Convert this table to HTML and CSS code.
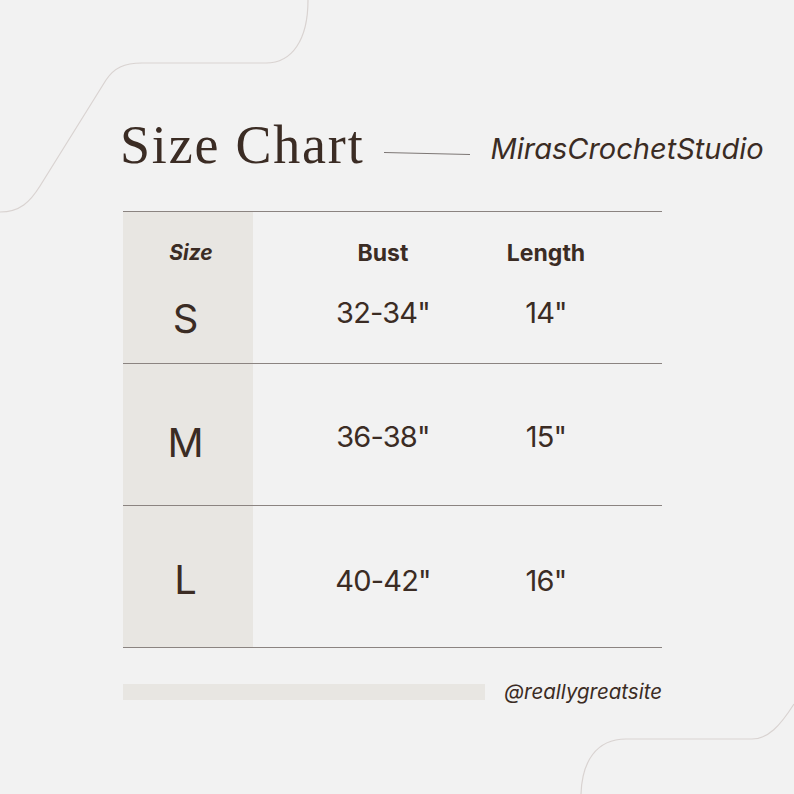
FILE: index.html
```html
<!DOCTYPE html>
<html lang="en">
<head>
<meta charset="utf-8">
<title>Size Chart</title>
<link rel="stylesheet" href="styles.css">
</head>
<body>
<div class="page">
  <svg class="deco" width="794" height="794" viewBox="0 0 794 794" aria-hidden="true">
    <path d="M0,212 C20,212 30,202 40,186 L106,80 C114,68 124,63 142,63 L266,63 C292,63 308,40 308,0" />
    <path d="M581,794 C582,762 596,739 626,739 L752,739 C768,739 780,726 794,704" />
  </svg>

  <header class="head">
    <h1 class="title">Size Chart</h1>
    <svg class="rule" width="86" height="60" viewBox="0 0 86 60" aria-hidden="true">
      <line x1="0" y1="37.5" x2="86" y2="39.5" />
    </svg>
    <p class="brand">MirasCrochetStudio</p>
  </header>

  <section class="chart">
    <div class="block block-first">
      <div class="row row-head">
        <div class="cell c-size"><span class="h-size">Size</span></div>
        <div class="cell c-bust">Bust</div>
        <div class="cell c-len">Length</div>
      </div>
      <div class="row row-data row-s">
        <div class="cell c-size"><span class="letter">S</span></div>
        <div class="cell c-bust">32-34"</div>
        <div class="cell c-len">14"</div>
      </div>
    </div>
    <div class="block">
      <div class="row row-data row-m">
        <div class="cell c-size"><span class="letter">M</span></div>
        <div class="cell c-bust">36-38"</div>
        <div class="cell c-len">15"</div>
      </div>
    </div>
    <div class="block">
      <div class="row row-data row-l">
        <div class="cell c-size"><span class="letter letter-l">L</span></div>
        <div class="cell c-bust">40-42"</div>
        <div class="cell c-len">16"</div>
      </div>
    </div>
  </section>

  <footer class="foot">
    <div class="bar"></div>
    <p class="site">@reallygreatsite</p>
  </footer>
</div>
</body>
</html>
```

FILE: styles.css
```css
* { box-sizing: border-box; }

html, body {
  margin: 0;
  padding: 0;
  background: #f2f2f2;
}

.page {
  position: relative;
  width: 794px;
  height: 794px;
  overflow: hidden;
  background: #f2f2f2;
  color: #3b2c24;
  font-family: Inter, "Liberation Sans", sans-serif;
  padding-top: 115px;
}

.deco {
  position: absolute;
  left: 0;
  top: 0;
  pointer-events: none;
}

.deco path {
  fill: none;
  stroke: #d9d3d1;
  stroke-width: 1.2;
}

.head {
  display: flex;
  align-items: center;
  height: 60px;
  margin-left: 120px;
}

.title {
  margin: 0;
  font-family: "Liberation Serif", serif;
  font-weight: 400;
  font-size: 54px;
  line-height: 60px;
  letter-spacing: 1.8px;
  color: #3b2c24;
}

.rule {
  margin-left: 20px;
  flex: none;
}

.rule line {
  stroke: #7d7775;
  stroke-width: 1.2;
}

.brand {
  margin: 0 0 0 20px;
  font-family: Inter, "Liberation Sans", sans-serif;
  font-style: italic;
  font-size: 29px;
  line-height: 60px;
  padding-top: 8px;
  color: #3b2c24;
}

.chart {
  margin: 36px 0 0 123px;
  width: 539px;
  border-top: 1px solid #8b8481;
  background: linear-gradient(to right, #e8e6e2 130px, transparent 130px);
  background-clip: padding-box;
}

.block {
  height: 142px;
  border-bottom: 1px solid #8b8481;
}

.block-first {
  height: 152px;
}

.row {
  display: flex;
}

.cell {
  display: flex;
  justify-content: center;
  white-space: nowrap;
}

.c-size { width: 130px; }
.c-bust { width: 260px; }
.c-len { width: 66px; }

.row-head {
  padding-top: 27px;
  font-size: 23px;
  line-height: 28px;
  font-weight: 700;
}

.h-size {
  font-style: italic;
  font-size: 21px;
  margin-left: 6px;
}

.row-data {
  font-size: 29px;
  line-height: 36px;
  letter-spacing: -0.8px;
}

.row-s { padding-top: 28px; }
.row-m { padding-top: 55px; }
.row-l { padding-top: 57px; }

.letter {
  font-size: 40px;
  line-height: 36px;
  margin-top: 6px;
  margin-right: 5px;
  letter-spacing: 0;
}

.letter-l {
  margin-top: -1px;
}

.foot {
  display: flex;
  align-items: center;
  margin: 32px 0 0 123px;
  width: 539px;
  height: 24px;
}

.bar {
  width: 362px;
  height: 16px;
  background: #e8e6e2;
}

.site {
  margin: 0 0 0 auto;
  font-style: italic;
  font-size: 20.5px;
  line-height: 24px;
  color: #3b2c24;
}
```
